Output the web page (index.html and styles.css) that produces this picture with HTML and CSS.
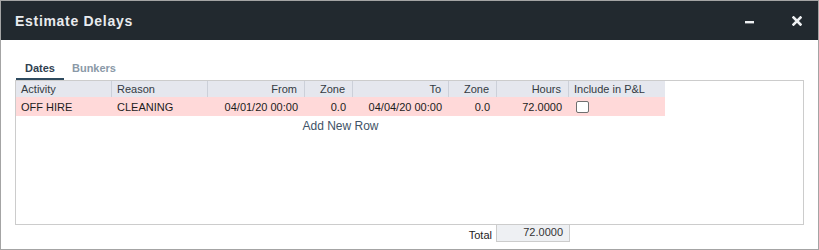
FILE: index.html
```html
<!DOCTYPE html>
<html>
<head>
<meta charset="utf-8">
<link rel="stylesheet" href="styles.css">
</head>
<body>
<div class="window">
  <div class="titlebar">
    <div class="title">Estimate Delays</div>
    <div class="controls">
      <svg class="ico-min" width="9" height="3" viewBox="0 0 9 3"><rect x="0" y="0" width="9" height="2.4" fill="#eef0f2"/></svg>
      <svg class="ico-close" width="10" height="10" viewBox="0 0 10 10"><path d="M1.5 1.5 L8.5 8.5 M8.5 1.5 L1.5 8.5" stroke="#eef0f2" stroke-width="2.6" stroke-linecap="square" fill="none"/></svg>
    </div>
  </div>
  <div class="content">
    <div class="tabs">
      <div class="tab active">Dates</div>
      <div class="tab">Bunkers</div>
    </div>
    <div class="grid">
      <div class="table">
        <div class="row head">
          <div class="cell">Activity</div>
          <div class="cell">Reason</div>
          <div class="cell num">From</div>
          <div class="cell num">Zone</div>
          <div class="cell num">To</div>
          <div class="cell num">Zone</div>
          <div class="cell num">Hours</div>
          <div class="cell">Include in P&amp;L</div>
        </div>
        <div class="row data">
          <div class="cell">OFF HIRE</div>
          <div class="cell">CLEANING</div>
          <div class="cell num">04/01/20 00:00</div>
          <div class="cell num">0.0</div>
          <div class="cell num">04/04/20 00:00</div>
          <div class="cell num">0.0</div>
          <div class="cell num">72.0000</div>
          <div class="cell"><span class="checkbox"></span></div>
        </div>
        <div class="addrow">Add New Row</div>
      </div>
    </div>
    <div class="footer">
      <div class="total-label">Total</div>
      <div class="total-box">72.0000</div>
    </div>
  </div>
</div>
</body>
</html>
```
FILE: styles.css
```css
* { box-sizing: border-box; }
html, body { margin: 0; padding: 0; background: #fff; }
body { font-family: "Liberation Sans", Arial, sans-serif; }
.window {
  width: 819px;
  height: 250px;
  border: 1px solid #a4a4a4;
  background: #fff;
  overflow: hidden;
}
.titlebar {
  height: 39px;
  background: #22292f;
  display: flex;
  align-items: center;
  justify-content: space-between;
  padding-left: 14px;
}
.title {
  color: #e9ebee;
  font-weight: bold;
  font-size: 14px;
  letter-spacing: 0.7px;
}
.controls {
  display: flex;
  align-items: center;
  padding-right: 16px;
}
.ico-min { display: block; margin-top: 3px; margin-right: 38px; }
.ico-close { display: block; margin-top: 1px; }
.content {
  padding: 22px 15px 0 14px;
}
.tabs {
  display: flex;
  padding-left: 1px;
}
.tab {
  font-size: 11px;
  font-weight: bold;
  line-height: 13px;
  color: #8a99a7;
  padding: 0 8px 3px 8px;
  border-bottom: 2px solid transparent;
}
.tab.active {
  color: #2f4050;
  padding: 0 9px 3px 9px;
  border-bottom-color: #2e4a5e;
}
.grid {
  height: 145px;
  border: 1px solid #cccccc;
  width: 789px;
}
.table { width: 649px; }
.row {
  display: grid;
  grid-template-columns: 96px 96px 97px 48px 96px 48px 72px 96px;
}
.cell {
  font-size: 11px;
  white-space: nowrap;
  padding: 0 5px;
  overflow: hidden;
}
.cell.num { text-align: right; padding-right: 7px; }
.head {
  background: #e5e7ee;
  height: 16px;
}
.head .cell {
  line-height: 16px;
  color: #333a42;
  border-right: 1px solid #ccd0d9;
}
.head .cell:last-child { border-right: none; }
.data {
  background: #ffd9d9;
  height: 19px;
}
.data .cell {
  line-height: 18px;
  padding-top: 1px;
  color: #1c1c1c;
}
.checkbox {
  display: inline-block;
  width: 13px;
  height: 12px;
  border: 1px solid #6f6f6f;
  border-radius: 2px;
  background: #fff;
  vertical-align: middle;
  margin-top: -3px;
  margin-left: 2px;
}
.addrow {
  text-align: center;
  font-size: 12px;
  line-height: 14px;
  padding-top: 3px;
  color: #3f5367;
}
.footer {
  display: grid;
  grid-template-columns: 480px 74px;
  margin-top: -1px;
  padding-left: 1px;
}
.total-label {
  font-size: 11px;
  color: #222;
  text-align: right;
  padding-right: 4px;
  padding-top: 5px;
}
.total-box {
  height: 18px;
  border: 1px solid #cccccc;
  background: #eef0f3;
  font-size: 11px;
  color: #333;
  text-align: right;
  padding-right: 6px;
  line-height: 15px;
}
```
